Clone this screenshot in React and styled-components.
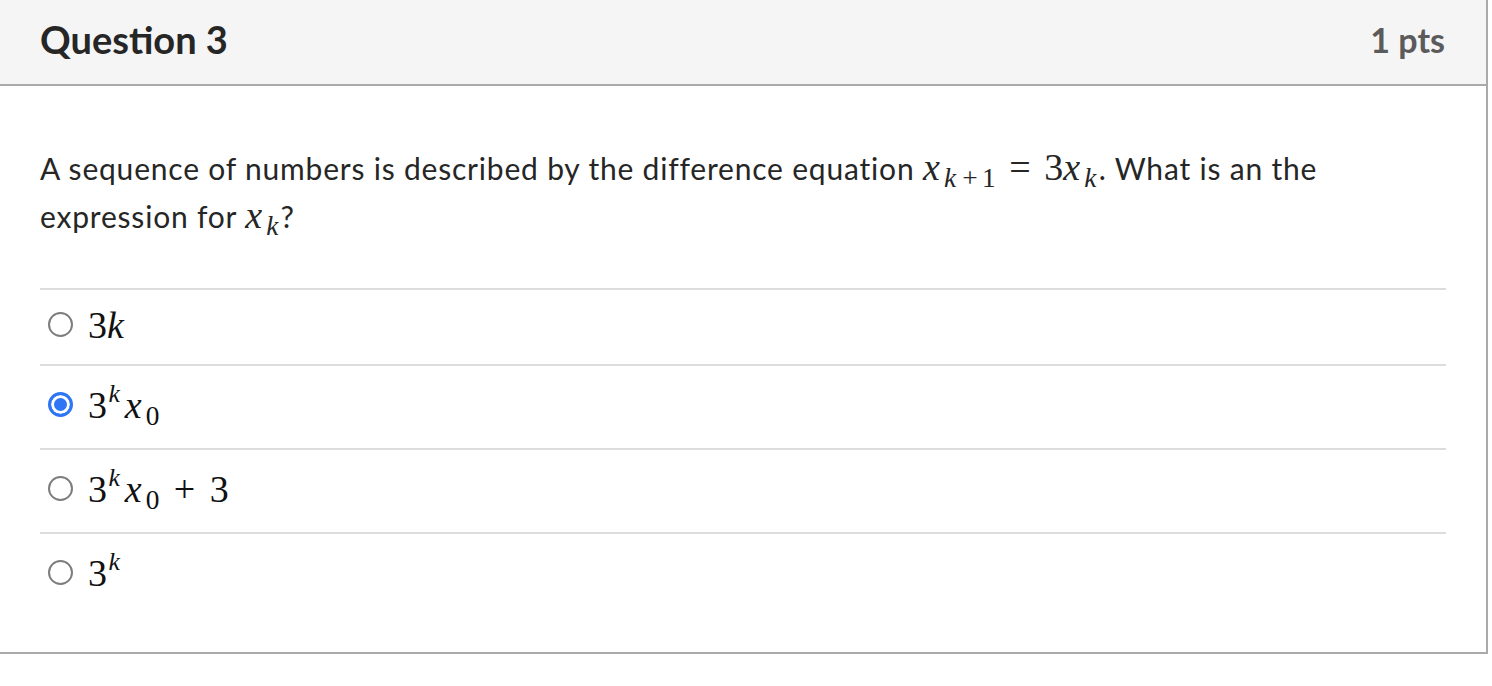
import React from "react";
import styled, { createGlobalStyle } from "styled-components";

const Global = createGlobalStyle`
  html, body { margin: 0; padding: 0; background: #ffffff; }
  body { font-family: Lato, "Noto Sans", sans-serif; color: #222; }
  * { box-sizing: border-box; }
`;

const Card = styled.div`
  width: 1490px;
  margin: -2px 0 0 -2px;
  border: 2px solid #aaaaaa;
  background: #ffffff;
`;

const Header = styled.div`
  height: 86px;
  display: flex;
  align-items: center;
  justify-content: space-between;
  padding: 0 41px 6px 40px;
  background: #f5f5f5;
  border-bottom: 2px solid #aaaaaa;
`;

const Title = styled.h2`
  margin: 0;
  font-family: Lato, sans-serif;
  font-weight: 700;
  font-size: 38px;
  color: #262626;
`;

const Points = styled.div`
  font-family: Lato, sans-serif;
  font-weight: 700;
  font-size: 34px;
  color: #5b5b5b;
`;

const Body = styled.div`
  padding: 58px 40px 36px 40px;
`;

const Prompt = styled.p`
  margin: 0;
  font-family: Lato, sans-serif;
  font-size: 30px;
  letter-spacing: 0.8px;
  line-height: 48px;
  color: #262626;
`;

const InlineMath = styled.span`
  font-family: "Liberation Serif", "DejaVu Serif", serif;
  font-size: 38px;
  letter-spacing: 0;
  line-height: 1;
  white-space: nowrap;
`;

const Var = styled.i`
  font-style: italic;
  margin-right: 0.08em;
`;

const Num = styled.span`
  font-style: normal;
`;

const Op = styled.span`
  display: inline-block;
  margin: 0 ${(p) => p.$space || "0.38em"};
  font-style: normal;
`;

const Sup = styled.sup`
  font-size: 0.68em;
  line-height: 0;
  vertical-align: 0.62em;
  margin-left: 0.06em;
  margin-right: 0.1em;
`;

const Sub = styled.sub`
  font-size: 0.72em;
  line-height: 0;
  vertical-align: -0.24em;
  margin-left: 0.04em;
`;

const Answers = styled.div`
  margin-top: 48px;
`;

const Answer = styled.label`
  display: flex;
  align-items: flex-start;
  gap: 15px;
  border-top: 2px solid #dcdcdc;
  padding: ${(p) => (p.$tall ? "24px" : "20px")} 0 ${(p) => (p.$tall ? "24px" : "20px")} 8px;
`;

const Radio = styled.span`
  flex: none;
  width: 25px;
  height: 25px;
  margin-top: 2px;
  border-radius: 50%;
  border: ${(p) => (p.$checked ? "3px solid #2f76f5" : "2px solid #7d7d7d")};
  background: ${(p) => (p.$checked ? "#2f76f5" : "#ffffff")};
  box-shadow: ${(p) => (p.$checked ? "inset 0 0 0 3px #ffffff" : "none")};
`;

const AnswerMath = styled.div`
  height: 34px;
  font-family: "Liberation Serif", "DejaVu Serif", serif;
  font-size: 38px;
  line-height: 30px;
  color: #111;
  white-space: nowrap;
`;

export default function App() {
  return (
    <>
      <Global />
      <Card>
        <Header>
          <Title>Question 3</Title>
          <Points>1 pts</Points>
        </Header>
        <Body>
          <Prompt>
            A sequence of numbers is described by the difference equation{" "}
            <InlineMath>
              <Var>x</Var>
              <Sub>
                <Var>k</Var>
                <Op $space="0.15em">+</Op>1
              </Sub>
              <Op $space="0.36em">=</Op>
              <Num>3</Num>
              <Var>x</Var>
              <Sub>
                <Var>k</Var>
              </Sub>
            </InlineMath>
            . What is an the expression for{" "}
            <InlineMath>
              <Var>x</Var>
              <Sub>
                <Var>k</Var>
              </Sub>
            </InlineMath>
            ?
          </Prompt>
          <Answers>
            <Answer>
              <Radio />
              <AnswerMath>
                <Num>3</Num>
                <Var>k</Var>
              </AnswerMath>
            </Answer>
            <Answer $tall>
              <Radio $checked />
              <AnswerMath>
                <Num>3</Num>
                <Sup>
                  <Var>k</Var>
                </Sup>
                <Var>x</Var>
                <Sub>0</Sub>
              </AnswerMath>
            </Answer>
            <Answer $tall>
              <Radio />
              <AnswerMath>
                <Num>3</Num>
                <Sup>
                  <Var>k</Var>
                </Sup>
                <Var>x</Var>
                <Sub>0</Sub>
                <Op>+</Op>
                <Num>3</Num>
              </AnswerMath>
            </Answer>
            <Answer $tall>
              <Radio />
              <AnswerMath>
                <Num>3</Num>
                <Sup>
                  <Var>k</Var>
                </Sup>
              </AnswerMath>
            </Answer>
          </Answers>
        </Body>
      </Card>
    </>
  );
}
